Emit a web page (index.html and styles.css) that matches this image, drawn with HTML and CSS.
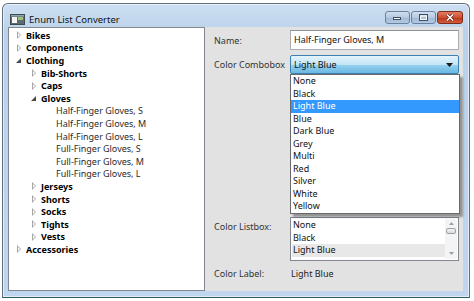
FILE: index.html
```html
<!DOCTYPE html>
<html lang="en">
<head>
    <meta charset="UTF-8">
    <title>Enum List Converter</title>
    <link rel="stylesheet" href="styles.css">
</head>
<body>
    <div class="window">
        <div class="titlebar">
            <svg class="app-icon" width="15" height="11" viewBox="0 0 15 11">
                <rect x="0.5" y="0.5" width="14" height="10" fill="#5d6b73" stroke="#3e484e"/>
                <rect x="2" y="3" width="5" height="6" fill="#f4f4f4"/>
                <rect x="8" y="3" width="5" height="3" fill="#9fc27a"/>
                <rect x="1" y="1" width="13" height="1.5" fill="#8fa4b2"/>
            </svg>
            <span class="title">Enum List Converter</span>
            <svg class="caption-buttons" width="78" height="13" viewBox="0 0 78 13">
                <defs>
                    <linearGradient id="glass" x1="0" y1="0" x2="0" y2="1">
                        <stop offset="0" stop-color="#d3e0ee"/>
                        <stop offset="0.5" stop-color="#b5cae1"/>
                        <stop offset="0.51" stop-color="#9fb8d4"/>
                        <stop offset="1" stop-color="#b6cce4"/>
                    </linearGradient>
                    <linearGradient id="red" x1="0" y1="0" x2="0" y2="1">
                        <stop offset="0" stop-color="#e2826a"/>
                        <stop offset="0.5" stop-color="#cc4f30"/>
                        <stop offset="0.51" stop-color="#b8361a"/>
                        <stop offset="1" stop-color="#d45f40"/>
                    </linearGradient>
                </defs>
                <rect x="0.5" y="0.5" width="24" height="12" rx="2.5" fill="url(#glass)" stroke="#6a82a0"/>
                <rect x="8.5" y="6.5" width="7" height="2" fill="#fff" stroke="#3b4d63"/>
                <rect x="26.5" y="0.5" width="24" height="12" rx="2.5" fill="url(#glass)" stroke="#6a82a0"/>
                <rect x="34.5" y="3.5" width="8" height="6" fill="none" stroke="#3b4d63"/>
                <rect x="35.5" y="5" width="6" height="3.5" fill="none" stroke="#fff"/>
                <rect x="52.5" y="0.5" width="25" height="12" rx="2.5" fill="url(#red)" stroke="#7e2a1c"/>
                <path d="M62 3.5 L68 9.5 M68 3.5 L62 9.5" stroke="#6b1d12" stroke-width="3"/>
                <path d="M62 3.5 L68 9.5 M68 3.5 L62 9.5" stroke="#fff" stroke-width="1.6"/>
            </svg>
        </div>

        <div class="client">
            <div class="tree">
                <ul class="level">
                    <li><div class="row"><span class="toggle closed"></span><b>Bikes</b></div></li>
                    <li><div class="row"><span class="toggle closed"></span><b>Components</b></div></li>
                    <li>
                        <div class="row"><span class="toggle open"></span><b>Clothing</b></div>
                        <ul class="level">
                            <li><div class="row"><span class="toggle closed"></span><b>Bib-Shorts</b></div></li>
                            <li><div class="row"><span class="toggle closed"></span><b>Caps</b></div></li>
                            <li>
                                <div class="row"><span class="toggle open"></span><b>Gloves</b></div>
                                <ul class="level">
                                    <li><div class="row"><span class="toggle"></span>Half-Finger Gloves, S</div></li>
                                    <li><div class="row"><span class="toggle"></span>Half-Finger Gloves, M</div></li>
                                    <li><div class="row"><span class="toggle"></span>Half-Finger Gloves, L</div></li>
                                    <li><div class="row"><span class="toggle"></span>Full-Finger Gloves, S</div></li>
                                    <li><div class="row"><span class="toggle"></span>Full-Finger Gloves, M</div></li>
                                    <li><div class="row"><span class="toggle"></span>Full-Finger Gloves, L</div></li>
                                </ul>
                            </li>
                            <li><div class="row"><span class="toggle closed"></span><b>Jerseys</b></div></li>
                            <li><div class="row"><span class="toggle closed"></span><b>Shorts</b></div></li>
                            <li><div class="row"><span class="toggle closed"></span><b>Socks</b></div></li>
                            <li><div class="row"><span class="toggle closed"></span><b>Tights</b></div></li>
                            <li><div class="row"><span class="toggle closed"></span><b>Vests</b></div></li>
                        </ul>
                    </li>
                    <li><div class="row"><span class="toggle closed"></span><b>Accessories</b></div></li>
                </ul>
            </div>

            <div class="form">
                <div class="field name-field">
                    <label class="field-label">Name:</label>
                    <div class="textbox">Half-Finger Gloves, M</div>
                </div>

                <div class="field combo-field">
                    <label class="field-label">Color Combobox</label>
                    <div class="combo">
                        <span>Light Blue</span>
                        <svg class="combo-arrow" width="7" height="4" viewBox="0 0 7 4"><path d="M0 0 H7 L3.5 4 Z" fill="#1a1a1a"/></svg>
                        <ul class="popup">
                            <li>None</li>
                            <li>Black</li>
                            <li class="selected">Light Blue</li>
                            <li>Blue</li>
                            <li>Dark Blue</li>
                            <li>Grey</li>
                            <li>Multi</li>
                            <li>Red</li>
                            <li>Silver</li>
                            <li>White</li>
                            <li>Yellow</li>
                        </ul>
                    </div>
                </div>

                <div class="field list-field">
                    <label class="field-label">Color Listbox:</label>
                    <div class="listbox">
                        <ul class="list-items">
                            <li>None</li>
                            <li>Black</li>
                            <li class="inactive">Light Blue</li>
                        </ul>
                        <div class="scrollbar">
                            <svg width="5" height="3" viewBox="0 0 5 3"><path d="M0 3 L2.5 0 L5 3 Z" fill="#9aa0a6"/></svg>
                            <div class="thumb"></div>
                            <svg class="down" width="5" height="3" viewBox="0 0 5 3"><path d="M0 0 L2.5 3 L5 0 Z" fill="#9aa0a6"/></svg>
                        </div>
                    </div>
                </div>

                <div class="field label-field">
                    <label class="field-label">Color Label:</label>
                    <div class="value">Light Blue</div>
                </div>
            </div>
        </div>
    </div>
</body>
</html>
```

FILE: styles.css
```css
/* Page */
body {
    margin: 0;
    background: #fff;
    font-family: 'Noto Sans', sans-serif;
    font-size: 9px;
    color: #1e1e1e;
}

/* Window frame */
.window {
    width: 468px;
    height: 295px;
    margin: 3px 0 0 2px;
    box-sizing: border-box;
    border: 1px solid #5f6f7e;
    border-bottom-color: #2f5c5c;
    border-radius: 6px 6px 0 0;
    background: linear-gradient(#cddff1, #b9d1ea 30px, #bfd6ee);
    box-shadow: inset 0 0 0 1px rgba(255, 255, 255, 0.55);
    padding: 0 6px 6px 5px;
    display: flex;
    flex-direction: column;
}

/* Title bar */
.titlebar {
    height: 23px;
    display: flex;
    align-items: center;
}
.app-icon {
    margin-left: 2px;
    margin-top: 8px;
}
.title {
    margin-left: 4px;
    margin-top: 7px;
    font-size: 9.5px;
    color: #111;
}
.caption-buttons {
    margin-left: auto;
    align-self: flex-start;
    margin-top: 7px;
}

/* Client area */
.client {
    flex: 1;
    display: flex;
    min-height: 0;
}

/* Tree */
.tree {
    width: 197px;
    box-sizing: border-box;
    background: #fff;
    border: 1px solid #828790;
    padding-top: 1px;
}
.tree ul {
    list-style: none;
    margin: 0;
    padding: 0 0 0 15px;
}
.tree > ul {
    padding-left: 7px;
}
.row {
    height: 12.6px;
    display: flex;
    align-items: center;
    white-space: nowrap;
    color: #2a2a2a;
}
.row b {
    color: #000;
}
.toggle {
    width: 10px;
    height: 8px;
    flex: none;
    position: relative;
}
.toggle.closed::before {
    content: '';
    position: absolute;
    left: 1px;
    top: 0;
    border-left: 4px solid #a6a6a6;
    border-top: 4px solid transparent;
    border-bottom: 4px solid transparent;
}
.toggle.closed::after {
    content: '';
    position: absolute;
    left: 2px;
    top: 2px;
    border-left: 2px solid #fff;
    border-top: 2px solid transparent;
    border-bottom: 2px solid transparent;
}
.toggle.open::before {
    content: '';
    position: absolute;
    left: 0;
    top: 2px;
    border-right: 5px solid #4a4a4a;
    border-top: 5px solid transparent;
}

/* Form */
.form {
    flex: 1;
    background: #e2e2e2;
    padding: 3px 4px 0 0;
    display: flex;
    flex-direction: column;
}
.field {
    display: flex;
    align-items: center;
}
.field-label {
    width: 85px;
    flex: none;
    box-sizing: border-box;
    padding-left: 9px;
    color: #333;
    white-space: nowrap;
}
.field > :last-child {
    flex: 1;
}
.combo-field {
    margin-top: 5px;
}
.list-field {
    margin-top: 143px;
    align-items: flex-start;
}
.list-field .field-label {
    padding-top: 3px;
}
.label-field {
    margin-top: 5px;
    height: 14px;
}
.textbox {
    height: 20px;
    box-sizing: border-box;
    background: #fff;
    border: 1px solid #abadb3;
    border-top-color: #8f949a;
    padding-left: 3px;
    line-height: 18px;
    color: #111;
}

/* Combobox */
.combo {
    height: 19px;
    box-sizing: border-box;
    border: 1px solid #3c7fb1;
    border-radius: 2px;
    background: linear-gradient(#e5f4fc, #c4e5f6 50%, #98d1ef 51%, #6ab8e3);
    position: relative;
    display: flex;
    align-items: center;
    padding: 0 5px 0 3px;
    color: #111;
}
.combo-arrow {
    margin-left: auto;
}
.popup {
    position: absolute;
    top: 18px;
    left: -1px;
    width: 170px;
    box-sizing: border-box;
    margin: 0;
    padding: 0;
    list-style: none;
    background: #fff;
    border: 1px solid #6a6a6a;
    box-shadow: 3px 3px 2px rgba(0, 0, 0, 0.35);
    z-index: 2;
}
.popup li {
    height: 12.5px;
    line-height: 12.5px;
    padding-left: 2px;
    color: #111;
}
.popup li.selected {
    background: #3399ff;
    color: #fff;
}

/* Listbox */
.listbox {
    height: 44px;
    box-sizing: border-box;
    background: #fff;
    border: 1px solid #828790;
    display: flex;
    padding: 1px;
}
.list-items {
    list-style: none;
    margin: 0;
    padding: 0;
    flex: 1;
}
.list-items li {
    height: 12.5px;
    line-height: 12.5px;
    padding-left: 1px;
    color: #111;
}
.list-items li.inactive {
    background: #e8e8e8;
}
.scrollbar {
    width: 12px;
    display: flex;
    flex-direction: column;
    align-items: center;
    padding-top: 3px;
    background: #f4f4f4;
}
.thumb {
    width: 10px;
    height: 6px;
    margin-top: 3px;
    box-sizing: border-box;
    border: 1px solid #9aa0a6;
    border-radius: 2px;
    background: linear-gradient(#f4f4f4, #dadada);
}
.scrollbar .down {
    margin-top: auto;
    margin-bottom: 4px;
}
.value {
    padding-left: 1px;
    color: #222;
}
```
